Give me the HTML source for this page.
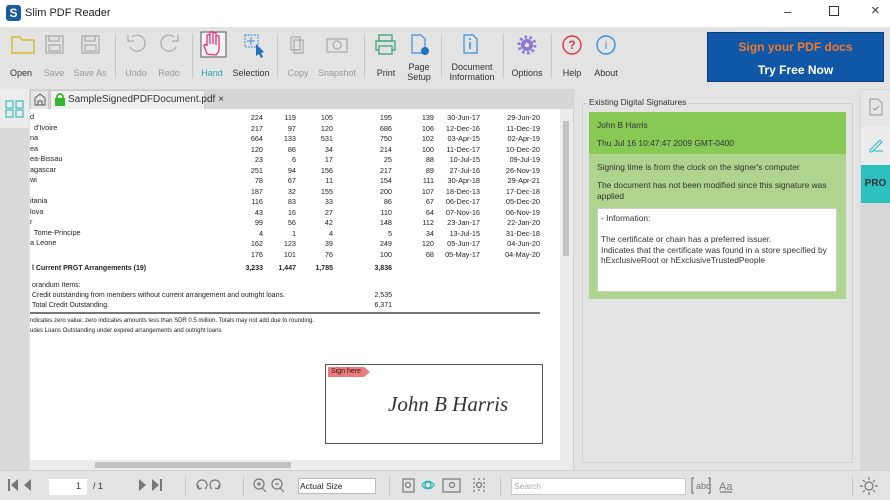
<!DOCTYPE html>
<html><head><meta charset="utf-8"><style>
*{margin:0;padding:0;box-sizing:border-box}
body{width:890px;height:500px;overflow:hidden;font-family:"Liberation Sans",sans-serif;background:#e3e3e3;position:relative;color:#222}
.a{position:absolute}
.lbl{position:absolute;font-size:9px;color:#333;text-align:center;white-space:nowrap;transform:translateX(-50%)}
.dis{color:#999}
.sep{position:absolute;top:34px;width:1px;height:44px;background:#c8c8c8}
.doc{position:absolute;left:30px;top:109px;width:530px;height:351px;background:#fff;overflow:hidden;font-size:7px;color:#222}
.r{position:absolute;text-align:right;width:40px}
.t{font-size:8.4px;color:#333}
</style></head><body>
<div class="a" style="left:0;top:0;width:890px;height:27px;background:#fff"></div>
<div class="a" style="left:6px;top:5px;width:15px;height:16px;background:#1a5aa0;border-radius:3px;color:#fff;font-size:12px;font-weight:bold;text-align:center;line-height:16px">S</div>
<div class="a" style="left:25px;top:7px;font-size:11px;color:#222">Slim PDF Reader</div>
<div class="a" style="left:784px;top:4px;font-size:13px;color:#333">&#8211;</div>
<div class="a" style="left:829px;top:6px;width:10px;height:10px;border:1px solid #333"></div>
<div class="a" style="left:871px;top:2px;font-size:15px;color:#333">&#215;</div>

<svg class="a" style="left:0;top:27px" width="700" height="40">
<path d="M12 10h8l2 3h12v13H12z" fill="none" stroke="#d7b92a" stroke-width="1.4"/>
<g fill="none" stroke="#aaa" stroke-width="1.2"><rect x="46" y="9" width="17" height="17"/><rect x="49" y="9" width="10" height="5"/><rect x="49" y="18" width="11" height="6"/>
<rect x="82" y="9" width="17" height="17"/><rect x="85" y="9" width="10" height="5"/><rect x="85" y="18" width="11" height="6"/>
<path d="M130 20a8 8 0 1 0 2-10M128 8v6h6"/><path d="M176 20a8 8 0 1 1-2-10M178 8v6h-6"/>
<rect x="291" y="10" width="9" height="13"/><rect x="294" y="13" width="9" height="13"/>
<rect x="327" y="12" width="20" height="13"/><circle cx="337" cy="18" r="4"/></g>
<rect x="201" y="5" width="25" height="25" fill="#f3f3f3" stroke="#555"/>
<path d="M207 27l-3-8c0-2 2-2 3 0v-10c0-2 3-2 3 0v8-11c0-2 3-2 3 0v11-10c0-2 3-2 3 0v11-8c0-2 3-2 3 0v12c0 3-2 5-3 6z" fill="none" stroke="#e2357a" stroke-width="1.3"/>
<rect x="245" y="8" width="13" height="12" fill="none" stroke="#3a8fd6" stroke-dasharray="2 1"/>
<path d="M251 10v8M247 14h8" stroke="#3a8fd6"/><path d="M256 17l8 8-3 1 2 4-2 1-2-4-3 2z" fill="#2272c3"/>
<g fill="none" stroke="#3da37a" stroke-width="1.3"><rect x="379" y="8" width="13" height="6"/><rect x="376" y="14" width="19" height="9"/><rect x="379" y="19" width="13" height="8" fill="#e3e3e3"/></g>
<path d="M412 8h9l4 4v14h-13z" fill="none" stroke="#3a8fd6" stroke-width="1.2"/><circle cx="425" cy="24" r="4" fill="#2272c3"/>
<path d="M464 8h9l4 4v14h-13z" fill="none" stroke="#3a8fd6" stroke-width="1.2"/><path d="M470 15v7" stroke="#3a8fd6" stroke-width="1.5"/><circle cx="470" cy="12" r="1" fill="#3a8fd6"/>
<circle cx="527" cy="18" r="6" fill="#8a77d6"/><circle cx="527" cy="18" r="2.3" fill="#e3e3e3"/><circle cx="527" cy="18" r="8" fill="none" stroke="#8a77d6" stroke-width="3" stroke-dasharray="2.5 2.5"/>
<circle cx="572" cy="18" r="9" fill="none" stroke="#d9383f" stroke-width="1.4"/><text x="572" y="22" font-size="12" font-weight="bold" fill="#d9383f" text-anchor="middle" font-family="Liberation Sans">?</text>
<circle cx="606" cy="18" r="9" fill="none" stroke="#3a8fd6" stroke-width="1.4"/><text x="606" y="22" font-size="11" fill="#3a8fd6" text-anchor="middle" font-family="Liberation Sans">i</text>
</svg>
<div class="lbl" style="left:21px;top:68px">Open</div>
<div class="lbl dis" style="left:54px;top:68px">Save</div>
<div class="lbl dis" style="left:90px;top:68px">Save As</div>
<div class="sep" style="left:115px"></div>
<div class="lbl dis" style="left:136px;top:68px">Undo</div>
<div class="lbl dis" style="left:169px;top:68px">Redo</div>
<div class="sep" style="left:192px"></div>
<div class="lbl" style="left:212px;top:68px;color:#2aa6b0">Hand</div>
<div class="lbl" style="left:251px;top:68px">Selection</div>
<div class="sep" style="left:277px"></div>
<div class="lbl dis" style="left:298px;top:68px">Copy</div>
<div class="lbl dis" style="left:337px;top:68px">Snapshot</div>
<div class="sep" style="left:364px"></div>
<div class="lbl" style="left:386px;top:68px">Print</div>
<div class="lbl" style="left:419px;top:62px;line-height:10px">Page<br>Setup</div>
<div class="sep" style="left:441px"></div>
<div class="lbl" style="left:472px;top:62px;line-height:10px">Document<br>Information</div>
<div class="sep" style="left:503px"></div>
<div class="lbl" style="left:527px;top:68px">Options</div>
<div class="sep" style="left:551px"></div>
<div class="lbl" style="left:572px;top:68px">Help</div>
<div class="lbl" style="left:606px;top:68px">About</div>

<div class="a" style="left:707px;top:32px;width:177px;height:50px;background:#1057a8;border:1px solid #0a3f80;text-align:center;font-weight:bold">
<div style="color:#f07a2a;font-size:12px;margin-top:7px">Sign your PDF docs</div>
<div style="color:#fff;font-size:12px;margin-top:9px">Try Free Now</div></div>

<div class="a" style="left:0;top:89px;width:573px;height:20px;background:#d6d6d6"></div>
<div class="a" style="left:0;top:89px;width:29px;height:39px;background:#ececec"></div>
<svg class="a" style="left:0;top:89px" width="60" height="120">
<g fill="none" stroke="#3fbcbf" stroke-width="1.2"><rect x="6" y="12" width="7" height="7"/><rect x="16" y="12" width="7" height="7"/><rect x="6" y="21" width="7" height="7"/><rect x="16" y="21" width="7" height="7"/></g>
<g fill="none" stroke="#aaa"><path d="M9 50h8l3 3v12H9z M13 50v8l2-2 2 2v-8"/><path d="M12 90v-8a3 3 0 0 1 6 0v10a4 4 0 0 1-8 0v-9"/><rect x="8" y="87" width="13" height="15"/></g>
</svg>
<div class="a" style="left:30px;top:90px;width:19px;height:19px;border:1px solid #c8c8c8;border-bottom:none;background:#e6e6e6"></div>
<svg class="a" style="left:32px;top:91px" width="16" height="16"><path d="M3 7l5-4 5 4v7H3z M6 14v-4h4v4" fill="none" stroke="#555"/></svg>
<div class="a" style="left:50px;top:90px;width:155px;height:19px;background:#f0f0f0;border:1px solid #c8c8c8;border-bottom:none"></div>
<svg class="a" style="left:54px;top:93px" width="12" height="13"><rect x="1" y="5" width="10" height="8" fill="#33b533"/><path d="M3 6V4a3 3 0 0 1 6 0v2" fill="none" stroke="#33b533" stroke-width="1.8"/></svg>
<div class="a" style="left:68px;top:94px;font-size:10px;color:#333">SampleSignedPDFDocument.pdf <span style="font-size:10px">&#215;</span></div>
<div class="a" style="left:0;top:128px;width:29px;height:342px;background:#dadada"></div>

<div class="doc">
<div class="a" style="left:0;top:3px;line-height:10.5px;width:200px;font-size:7.3px">d<br>&nbsp; d'Ivoire<br>na<br>ea<br>ea-Bissau<br>agascar<br>wi<br>&nbsp;<br>itania<br>lova<br>r<br>&nbsp; Tome-Principe<br>a Leone<br>&nbsp;</div>
<div id="cols"></div>
<div class="a" style="left:2px;top:156px;font-weight:bold">l Current PRGT Arrangements (19)</div>
<div class="a" style="left:193px;top:156px;font-weight:bold;width:300px">
<span class="r" style="left:0">3,233</span><span class="r" style="left:33px">1,447</span><span class="r" style="left:70px">1,785</span><span class="r" style="left:129px">3,836</span></div>
<div class="a" style="left:2px;top:172px;line-height:10px">orandum Items:<br>Credit outstanding from members without current arrangement and outright loans.<br>Total Credit Outstanding.</div>
<div class="r a" style="left:322px;top:182px;line-height:10px">2,535<br>6,371</div>
<div class="a" style="left:0;top:203px;width:510px;height:2px;background:#777"></div>
<div class="a" style="left:0;top:207px;font-size:6px;line-height:10px">ndicates zero value, zero indicates amounts less than SDR 0.5 million. Totals may not add due to rounding.<br>udes Loans Outstanding under expired arrangements and outright loans</div>
<div class="a" style="left:295px;top:255px;width:218px;height:80px;border:1px solid #555"></div>
<div class="a" style="left:298px;top:258px;height:10px;font-size:7px;line-height:10px;color:#222;display:flex"><span style="background:#f07a7a;padding:0 3px">Sign here</span><span style="width:0;height:0;border-left:6px solid #f07a7a;border-top:5px solid transparent;border-bottom:5px solid transparent"></span></div>
<div class="a" style="left:358px;top:283px;font-family:'Liberation Serif',serif;font-style:italic;font-size:21px;color:#333">John B Harris</div>
</div>
<script>
var d=[[224,119,105,195,139,'30-Jun-17','29-Jun-20'],[217,97,120,686,106,'12-Dec-16','11-Dec-19'],[664,133,531,750,102,'03-Apr-15','02-Apr-19'],[120,86,34,214,100,'11-Dec-17','10-Dec-20'],[23,6,17,25,88,'10-Jul-15','09-Jul-19'],[251,94,156,217,89,'27-Jul-16','26-Nov-19'],[78,67,11,154,111,'30-Apr-18','29-Apr-21'],[187,32,155,200,107,'18-Dec-13','17-Dec-18'],[116,83,33,86,67,'06-Dec-17','05-Dec-20'],[43,16,27,110,64,'07-Nov-16','06-Nov-19'],[99,56,42,148,112,'23-Jan-17','22-Jan-20'],[4,1,4,5,34,'13-Jul-15','31-Dec-18'],[162,123,39,249,120,'05-Jun-17','04-Jun-20'],[176,101,76,100,68,'05-May-17','04-May-20']];
var x=[233,266,303,362,404,450,510],h='';
d.forEach(function(r,i){r.forEach(function(v,j){h+='<div class="a r" style="width:50px;font-size:7.3px;left:'+(x[j]-50)+'px;top:'+(4+i*10.5)+'px">'+v+'</div>'})});
document.getElementById('cols').innerHTML=h;
</script>
<div class="a" style="left:560px;top:109px;width:13px;height:351px;background:#ececec"></div>
<div class="a" style="left:563px;top:121px;width:6px;height:135px;background:#c2c2c2"></div>
<div class="a" style="left:30px;top:460px;width:543px;height:10px;background:#ececec"></div>
<div class="a" style="left:95px;top:462px;width:196px;height:6px;background:#c2c2c2"></div>

<div class="a" style="left:573px;top:89px;width:287px;height:381px;background:#e3e3e3;border-left:1px solid #d0d0d0"></div>
<div class="a" style="left:582px;top:103px;width:271px;height:360px;border:1px solid #cfcfcf;border-radius:2px"></div>
<div class="a t" style="left:587px;top:97px;background:#e3e3e3;padding:0 2px">Existing Digital Signatures</div>
<div class="a" style="left:589px;top:112px;width:257px;height:42px;background:#88c956"></div>
<div class="a" style="left:589px;top:154px;width:257px;height:145px;background:#aed48e"></div>
<div class="a t" style="left:597px;top:120px">John B Harris</div>
<div class="a t" style="left:597px;top:138px">Thu Jul 16 10:47:47 2009 GMT-0400</div>
<div class="a t" style="left:597px;top:162px">Signing time is from the clock on the signer's computer</div>
<div class="a t" style="left:597px;top:180px;width:245px;line-height:11px">The document has not been modified since this signature was applied</div>
<div class="a t" style="left:597px;top:208px;width:240px;height:84px;background:#fff;border:1px solid #ccc;padding:4px 3px;line-height:10.5px">- Information:<br><br>The certificate or chain has a preferred issuer.<br>Indicates that the certificate was found in a store specified by hExclusiveRoot or hExclusiveTrustedPeople</div>

<div class="a" style="left:860px;top:89px;width:30px;height:381px;background:#d8d8d8"></div>
<div class="a" style="left:861px;top:90px;width:29px;height:37px;background:#e6e6e6"></div>
<div class="a" style="left:861px;top:127px;width:29px;height:38px;background:#ececec"></div>
<svg class="a" style="left:861px;top:90px" width="29" height="80"><path d="M9 9h8l4 4v12H9z" fill="none" stroke="#999"/><path d="M12 18l2 2 4-4" fill="none" stroke="#999"/>
<path d="M9 60l10-10 2 2-10 10h-2zM12 61c3-1 4 1 6 0c2-1 3 1 4 0" fill="none" stroke="#2fbcc0" stroke-width="1.1"/></svg>
<div class="a" style="left:861px;top:165px;width:29px;height:38px;background:#2ebfbf;font-weight:bold;font-size:10px;color:#333;text-align:center;line-height:38px">PRO</div>

<div class="a" style="left:0;top:470px;width:890px;height:30px;background:#e3e3e3;border-top:1px solid #d0d0d0"></div>
<svg class="a" style="left:0;top:472px" width="890" height="28" font-family="Liberation Sans">
<g fill="#777"><rect x="8" y="7" width="2" height="12"/><path d="M18 7v12l-7-6z"/><path d="M31 7v12l-7-6z"/><path d="M139 7v12l7-6z"/><path d="M152 7v12l7-6z"/><rect x="160" y="7" width="2" height="12"/></g>
<g fill="none" stroke="#777" stroke-width="1.2"><path d="M199 17a5 5 0 1 1 6 0M198 13l1 4 3-1"/><path d="M212 17a5 5 0 1 1 6 0M219 13l-1 4-3-1"/>
<circle cx="259" cy="12" r="5"/><path d="M262 16l4 4M257 12h4M259 10v4"/><circle cx="277" cy="12" r="5"/><path d="M280 16l4 4M275 12h4"/>
<rect x="403" y="7" width="11" height="13"/><circle cx="408" cy="13" r="2.5"/><rect x="443" y="7" width="17" height="13"/><circle cx="452" cy="13" r="2.5"/><circle cx="479" cy="13" r="2.5"/><path d="M479 6v3M479 17v4M474 6v15M484 6v15" stroke-dasharray="2 2"/>
<path d="M694 6h-2v15h2M708 6h2v15h-2"/><path d="M720 20h12"/>
<circle cx="869" cy="14" r="4"/><path d="M869 5v3M869 20v3M860 14h3M875 14h3M863 8l2 2M873 18l2 2M863 20l2-2M873 10l2-2"/></g>
<g fill="none" stroke="#2fb5be" stroke-width="1.3"><circle cx="428" cy="13" r="3"/><path d="M422 13c3-5 9-5 12 0c-3 5-9 5-12 0"/></g>
<text x="696" y="17" font-size="9" fill="#777">abc</text><text x="719" y="18" font-size="11" fill="#777">Aa</text>
<path d="M679 6l4 7-4 7" fill="none" stroke="#aaa"/>
<path d="M366 11h6l-3 4z" fill="#333"/>
</svg>
<div class="a" style="left:49px;top:479px;width:38px;height:16px;background:#fff;font-size:9px;text-align:right;padding:2px 6px 0 0;color:#333">1</div>
<div class="a" style="left:93px;top:481px;font-size:9px;color:#333">/ 1</div>
<div class="a" style="left:298px;top:478px;width:78px;height:16px;background:#fff;border:1px solid #bbb;font-size:8.5px;padding:2px 1px;color:#222">Actual Size</div>
<div class="a" style="left:511px;top:478px;width:175px;height:17px;background:#fff;border:1px solid #ccc;font-size:8.5px;padding:2px 2px;color:#aaa">Search</div>
<div class="sep" style="left:185px;top:476px;height:20px"></div>
<div class="sep" style="left:243px;top:476px;height:20px"></div>
<div class="sep" style="left:389px;top:476px;height:20px"></div>
<div class="sep" style="left:500px;top:476px;height:20px"></div>
<div class="sep" style="left:852px;top:476px;height:20px"></div>
</body></html>
